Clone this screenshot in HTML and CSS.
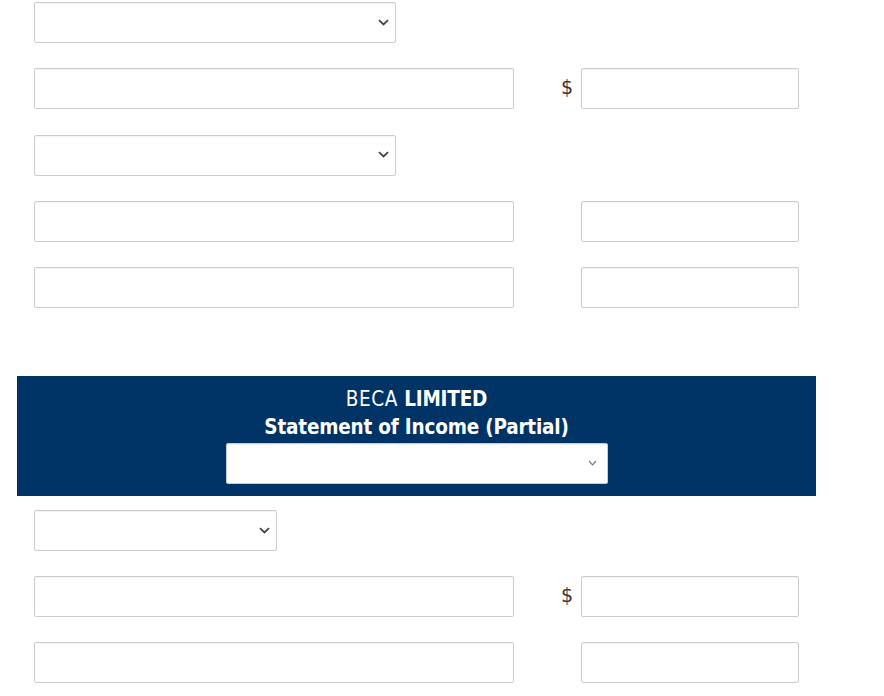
FILE: index.html
```html
<!DOCTYPE html>
<html>
<head>
<meta charset="utf-8">
<link rel="stylesheet" href="styles.css">
</head>
<body>
<div class="page">
  <section class="block top">
    <div class="row"><div class="select w362"><span class="chev"><svg width="11" height="7" viewBox="0 0 11 7"><path d="M1 1.2 L5.5 5.4 L10 1.2" fill="none" stroke="#444" stroke-width="1.8"/></svg></span></div></div>
    <div class="row"><div class="field wide"></div><div class="cur">$</div><div class="field amt"></div></div>
    <div class="row"><div class="select w362"><span class="chev"><svg width="11" height="7" viewBox="0 0 11 7"><path d="M1 1.2 L5.5 5.4 L10 1.2" fill="none" stroke="#444" stroke-width="1.8"/></svg></span></div></div>
    <div class="row"><div class="field wide"></div><div class="cur"></div><div class="field amt"></div></div>
    <div class="row"><div class="field wide"></div><div class="cur"></div><div class="field amt"></div></div>
  </section>

  <header class="banner">
    <div class="title"><span class="reg">BECA</span> LIMITED</div>
    <div class="title">Statement of Income (Partial)</div>
    <div class="select w382 light"><span class="chev"><svg width="9" height="6" viewBox="0 0 9 6"><path d="M1 1 L4.5 4.8 L8 1" fill="none" stroke="#777" stroke-width="1.2"/></svg></span></div>
  </header>

  <section class="block bottom">
    <div class="row"><div class="select w243"><span class="chev"><svg width="11" height="7" viewBox="0 0 11 7"><path d="M1 1.2 L5.5 5.4 L10 1.2" fill="none" stroke="#444" stroke-width="1.8"/></svg></span></div></div>
    <div class="row"><div class="field wide"></div><div class="cur">$</div><div class="field amt"></div></div>
    <div class="row"><div class="field wide"></div><div class="cur"></div><div class="field amt"></div></div>
  </section>
</div>
</body>
</html>
```

FILE: styles.css
```css
html, body {
  margin: 0;
  padding: 0;
  background: #ffffff;
  font-family: "DejaVu Sans", Verdana, sans-serif;
  color: #333333;
}

.page {
  width: 884px;
  padding-top: 2px;
}

.block {
  display: flex;
  flex-direction: column;
  gap: 25.25px;
  padding-left: 34px;
}

.bottom {
  gap: 25px;
  margin-top: 14px;
}

.row {
  display: flex;
  align-items: center;
  height: 41px;
}

.field,
.select {
  box-sizing: border-box;
  height: 41px;
  border: 1px solid #cccccc;
  border-radius: 2px;
  background: #ffffff;
  box-shadow: inset 0 1px 1px rgba(0, 0, 0, 0.05);
}

.wide { width: 480px; }
.amt { width: 218px; }

.cur {
  width: 67px;
  box-sizing: border-box;
  padding-right: 8px;
  padding-bottom: 4px;
  text-align: right;
  font-size: 19px;
  line-height: 20px;
  color: #333333;
}

.select {
  display: flex;
  align-items: center;
  justify-content: flex-end;
  padding-right: 6px;
  padding-bottom: 1px;
}

.chev {
  display: flex;
  align-items: center;
}

.w362 { width: 362px; }
.w243 { width: 243px; }
.w382 { width: 382px; }

.banner {
  margin: 68px 0 0 17px;
  width: 799px;
  height: 120px;
  box-sizing: border-box;
  background: #003366;
  color: #ffffff;
  display: flex;
  flex-direction: column;
  align-items: center;
  padding-top: 9px;
}

.title {
  font-family: "DejaVu Sans Condensed", "DejaVu Sans", sans-serif;
  font-weight: bold;
  font-size: 20.5px;
  line-height: 28px;
  letter-spacing: -0.2px;
}

.title .reg {
  font-weight: normal;
  letter-spacing: 0.6px;
}

.banner .select {
  margin-top: 2px;
  border-color: #cccccc;
}

.light {
  padding-right: 10px;
}
```
